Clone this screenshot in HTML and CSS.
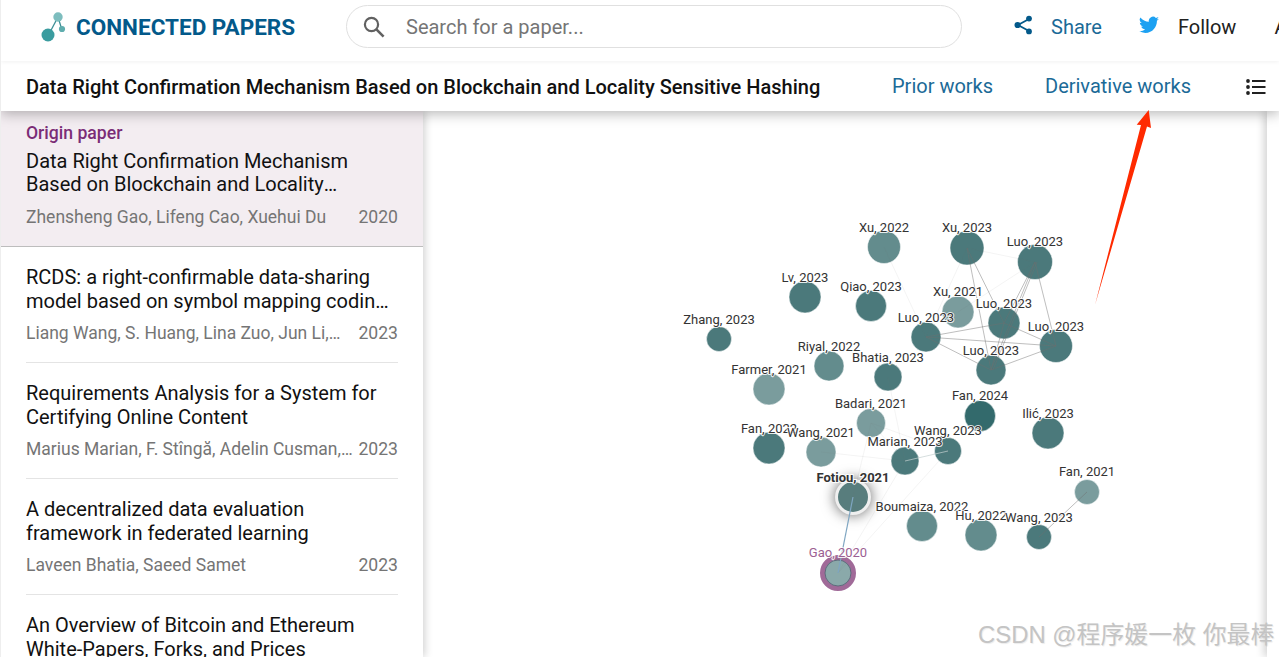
FILE: index.html
```html
<!DOCTYPE html>
<html lang="en">
<head>
    <meta charset="UTF-8">
    <title>Connected Papers</title>
    <link rel="stylesheet" href="styles.css">
</head>
<body>
    <div class="page">
        <header class="top-bar">
            <a class="logo">
                <svg class="logo-icon" width="30" height="34" viewBox="0 0 30 34">
                    <path d="M8 26L18 7L22 20" fill="none" stroke="#3f8f96" stroke-width="1.3"/>
                    <circle cx="8" cy="25" r="6.5" fill="#3a9c9f"/>
                    <circle cx="18" cy="7" r="4.7" fill="#7dbdbe"/>
                    <circle cx="22" cy="19" r="3.1" fill="#5fadae"/>
                </svg>
                <span class="logo-text">CONNECTED PAPERS</span>
            </a>
            <div class="search-box">
                <svg width="24" height="24" viewBox="0 0 24 24" class="search-icon">
                    <circle cx="9.5" cy="9.5" r="6.6" fill="none" stroke="#616161" stroke-width="2.2"/>
                    <path d="M14.4 14.4L21.6 21.6" stroke="#616161" stroke-width="2.6"/>
                </svg>
                <span class="search-text">Search for a paper...</span>
            </div>
            <a class="top-link share-link">
                <svg width="19" height="20" viewBox="0 0 19 20">
                    <path d="M15 4L4 10L15 16" fill="none" stroke="#03598a" stroke-width="1.8"/>
                    <circle cx="15" cy="3.6" r="2.9" fill="#03598a"/>
                    <circle cx="3.6" cy="10" r="3.1" fill="#03598a"/>
                    <circle cx="15" cy="16.4" r="2.9" fill="#03598a"/>
                </svg>
                <span>Share</span>
            </a>
            <a class="top-link follow-link">
                <svg width="20" height="18" viewBox="0 0 24 20">
                    <path fill="#1da1f2" d="M24 2.4c-.9.4-1.8.7-2.8.8 1-.6 1.8-1.600 2.200-2.700-1 .6-2 1-3.100 1.200A4.900 4.900 0 0 0 11.900 6.200C7.800 6 4.200 4 1.700.9a4.900 4.900 0 0 0 1.500 6.600c-.8 0-1.600-.2-2.200-.6v.1c0 2.400 1.700 4.400 3.900 4.800-.7.200-1.500.2-2.200.1.600 2 2.400 3.400 4.600 3.400A9.900 9.900 0 0 1 0 17.300 13.900 13.900 0 0 0 7.500 19.500c9.100 0 14-7.500 14-14v-.6c1-.7 1.800-1.600 2.500-2.500z"/>
                </svg>
                <span>Follow</span>
            </a>
            <a class="top-link about-link">About</a>
        </header>

        <div class="title-bar">
            <div class="graph-title">Data Right Confirmation Mechanism Based on Blockchain and Locality Sensitive Hashing</div>
            <a class="work-link prior-link">Prior works</a>
            <a class="work-link derivative-link">Derivative works</a>
            <svg class="list-icon" width="20" height="16" viewBox="0 0 20 16">
                <circle cx="2" cy="2" r="1.900" fill="#212121"/>
                <circle cx="2" cy="8" r="1.900" fill="#212121"/>
                <circle cx="2" cy="14" r="1.900" fill="#212121"/>
                <path d="M6 2H19.500M6 8H19.500M6 14H19.500" stroke="#212121" stroke-width="2"/>
            </svg>
        </div>

        <div class="main">
            <aside class="paper-list">
                <div class="paper-item origin">
                    <div class="origin-label">Origin paper</div>
                    <div class="paper-title">Data Right Confirmation Mechanism Based on Blockchain and Locality Sensitive Hashing</div>
                    <div class="paper-meta">
                        <span class="paper-authors">Zhensheng Gao, Lifeng Cao, Xuehui Du</span>
                        <span class="paper-year">2020</span>
                    </div>
                </div>
                <div class="paper-item">
                    <div class="paper-title">RCDS: a right-confirmable data-sharing model based on symbol mapping coding and blockchain</div>
                    <div class="paper-meta">
                        <span class="paper-authors">Liang Wang, S. Huang, Lina Zuo, Jun Li,…</span>
                        <span class="paper-year">2023</span>
                    </div>
                </div>
                <div class="paper-item">
                    <div class="paper-title">Requirements Analysis for a System for Certifying Online Content</div>
                    <div class="paper-meta">
                        <span class="paper-authors">Marius Marian, F. Stîngă, Adelin Cusman,…</span>
                        <span class="paper-year">2023</span>
                    </div>
                </div>
                <div class="paper-item">
                    <div class="paper-title">A decentralized data evaluation framework in federated learning</div>
                    <div class="paper-meta">
                        <span class="paper-authors">Laveen Bhatia, Saeed Samet</span>
                        <span class="paper-year">2023</span>
                    </div>
                </div>
                <div class="paper-item">
                    <div class="paper-title">An Overview of Bitcoin and Ethereum White-Papers, Forks, and Prices</div>
                </div>
            </aside>

            <section class="graph-panel">
                <!-- viewBox keeps the graph in screenshot coordinates -->
                <svg class="graph" viewBox="423 111 844 546" preserveAspectRatio="xMinYMin">
                    <g class="nodes">
                        <circle cx="884" cy="247" r="16.500" class="n3"/>
                        <circle cx="967" cy="248" r="17" class="n1"/>
                        <circle cx="1035" cy="262" r="17.500" class="n1"/>
                        <circle cx="805" cy="297" r="16" class="n1"/>
                        <circle cx="871" cy="306" r="15.500" class="n1"/>
                        <circle cx="958" cy="312" r="16" class="n4"/>
                        <circle cx="1004" cy="323" r="16" class="n1"/>
                        <circle cx="719" cy="339" r="12.500" class="n1"/>
                        <circle cx="926" cy="337" r="15" class="n1"/>
                        <circle cx="1056" cy="346" r="16.500" class="n1"/>
                        <circle cx="829" cy="366" r="15" class="n3"/>
                        <circle cx="991" cy="370" r="15" class="n1"/>
                        <circle cx="888" cy="377" r="14" class="n1"/>
                        <circle cx="769" cy="389" r="16" class="n4"/>
                        <circle cx="980" cy="416" r="15.500" class="n0"/>
                        <circle cx="871" cy="423" r="14.500" class="n4"/>
                        <circle cx="1048" cy="433" r="16" class="n1"/>
                        <circle cx="769" cy="448" r="16" class="n1"/>
                        <circle cx="821" cy="452" r="15" class="n4"/>
                        <circle cx="948" cy="451" r="13.500" class="n1"/>
                        <circle cx="905" cy="461" r="14" class="n1"/>
                        <circle cx="1087" cy="492" r="12.500" class="n4"/>
                        <circle cx="922" cy="526" r="15.500" class="n3"/>
                        <circle cx="981" cy="535" r="16" class="n3"/>
                        <circle cx="1039" cy="537" r="12.500" class="n1"/>
                        <circle cx="853" cy="497" r="16.500" class="selected"/>
                        <circle cx="838" cy="573" r="15.500" class="origin-node"/>
                        <circle cx="838" cy="573" r="13" class="origin-core"/>
                    </g>
                    <g class="edges faint">
                        <path d="M967 248L926 337M967 248L1035 262M958 312L1035 262M838 573L905 461M838 573L948 451M853 497L871 423M871 423L948 451M821 452L905 461M871 423L905 461M888 377L905 461M884 247L926 337"/>
                    </g>
                    <g class="edges">
                        <path d="M967 248L991 370M967 248L1004 323M1035 262L991 370M1037 262L993 370M1035 262L1004 323M1035 262L1056 346M926 337L1004 323M926 337L1056 346M926 337L991 370M1004 323L1056 346M991 370L1056 346M1004 323L991 370M1039 537L1087 492"/>
                    </g>
                    <path class="edge-main" d="M853 497L838 573"/>
                    <path class="edge-light" d="M905 461L948 451"/>
                    <g class="labels">
                        <text x="884" y="232">Xu, 2022</text>
                        <text x="967" y="232">Xu, 2023</text>
                        <text x="1035" y="246">Luo, 2023</text>
                        <text x="805" y="282">Lv, 2023</text>
                        <text x="871" y="291">Qiao, 2023</text>
                        <text x="958" y="296">Xu, 2021</text>
                        <text x="1004" y="308">Luo, 2023</text>
                        <text x="719" y="324">Zhang, 2023</text>
                        <text x="926" y="322">Luo, 2023</text>
                        <text x="1056" y="331">Luo, 2023</text>
                        <text x="829" y="351">Riyal, 2022</text>
                        <text x="991" y="355">Luo, 2023</text>
                        <text x="888" y="362">Bhatia, 2023</text>
                        <text x="769" y="374">Farmer, 2021</text>
                        <text x="980" y="400">Fan, 2024</text>
                        <text x="871" y="408">Badari, 2021</text>
                        <text x="1048" y="418">Ilić, 2023</text>
                        <text x="769" y="433">Fan, 2022</text>
                        <text x="821" y="437">Wang, 2021</text>
                        <text x="948" y="435">Wang, 2023</text>
                        <text x="905" y="446">Marian, 2023</text>
                        <text x="1087" y="476">Fan, 2021</text>
                        <text x="853" y="482" class="label-selected">Fotiou, 2021</text>
                        <text x="922" y="511">Boumaiza, 2022</text>
                        <text x="981" y="520">Hu, 2022</text>
                        <text x="1039" y="522">Wang, 2023</text>
                        <text x="838" y="557" class="label-origin">Gao, 2020</text>
                    </g>
                </svg>
            </section>
            <div class="right-panel"></div>
        </div>

        <!-- annotation drawn over the screenshot -->
        <svg class="red-arrow" width="60" height="200" viewBox="0 0 60 200">
            <path d="M54.700 0L57 18L53 16.500L1 195L47 15L42.700 14.700Z" fill="#ff2a00"/>
        </svg>
        <div class="watermark">CSDN @程序媛一枚 你最棒</div>
    </div>
</body>
</html>
```

FILE: styles.css
```css
html, body {
    margin: 0;
    height: 100%;
    overflow: hidden;
}

body {
    font-family: Roboto, 'Liberation Sans', sans-serif;
    background-color: white;
    color: #212121;
}

.page {
    position: relative;
    display: flex;
    flex-direction: column;
    height: 657px;
    overflow: hidden;
    border-left: 1px solid #eeeeee;
    box-sizing: border-box;
}

.top-bar {
    display: flex;
    align-items: center;
    flex: 0 0 61px;
    padding-bottom: 8px;
    box-sizing: border-box;
    white-space: nowrap;
    box-shadow: 0 1px 4px rgba(0, 0, 0, 0.06);
    position: relative;
    z-index: 3;
    background-color: white;
}

.logo {
    display: flex;
    align-items: center;
    flex: none;
    margin-left: 39px;
    width: 306px;
}

.logo-icon {
    margin-right: 6px;
    margin-top: 1px;
}

.logo-text {
    font-size: 22.500px;
    font-weight: 700;
    color: #03598a;
}

.search-box {
    display: flex;
    align-items: center;
    flex: none;
    width: 616px;
    height: 43px;
    border: 1px solid #e0e0e0;
    border-radius: 22px;
    box-sizing: border-box;
}

.search-icon {
    margin-left: 15px;
}

.search-text {
    margin-left: 20px;
    font-size: 20px;
    color: #757575;
}

.top-link {
    display: flex;
    align-items: center;
    flex: none;
    font-size: 20px;
}

.share-link {
    margin-left: 52px;
    color: #1b6a97;
}

.share-link svg {
    margin-right: 18px;
    margin-top: -4px;
}

.follow-link {
    margin-left: 37px;
    color: #212121;
}

.follow-link svg {
    margin-right: 19px;
    margin-top: -4px;
}

.about-link {
    margin-left: 38px;
    color: #212121;
}

.title-bar {
    display: flex;
    align-items: center;
    flex: 0 0 50px;
    position: relative;
    z-index: 2;
    background-color: white;
    box-shadow: 0 3px 12px rgba(0, 0, 0, 0.28);
}

.graph-title {
    margin-left: 25px;
    margin-top: 2px;
    width: 866px;
    font-size: 20px;
    font-weight: 500;
    color: #111111;
    white-space: nowrap;
}

.work-link {
    font-size: 20px;
    color: #1b6a97;
    white-space: nowrap;
}

.prior-link {
    width: 153px;
}

.derivative-link {
    width: 201px;
}

.list-icon {
    flex: none;
    margin-top: 2px;
}

.main {
    display: flex;
    flex: 1;
    min-height: 0;
}

.paper-list {
    flex: 0 0 422px;
    position: relative;
    z-index: 1;
    overflow: hidden;
    background-color: white;
    box-shadow: 2px 0 8px rgba(0, 0, 0, 0.18);
}

.paper-item {
    margin: 0 25px;
    padding: 18px 0 16.700px;
    border-bottom: 1px solid #e4e4e4;
}

.paper-item:last-child {
    border-bottom: none;
}

.paper-item.origin {
    margin: 0;
    padding: 12px 25px 17px;
    background-color: #f3edf1;
    border-bottom: 1px solid #bdbdbd;
}

.origin-label {
    font-size: 17.600px;
    font-weight: 500;
    line-height: 21px;
    margin-bottom: 6px;
    color: #7b2d77;
}

.paper-title {
    font-size: 20px;
    line-height: 24px;
    color: #111111;
    display: -webkit-box;
    -webkit-box-orient: vertical;
    -webkit-line-clamp: 2;
    overflow: hidden;
}

.origin .paper-title {
    line-height: 23px;
}

.paper-meta {
    display: flex;
    justify-content: space-between;
    margin-top: 8.500px;
    font-size: 17.600px;
    line-height: 24px;
    color: #757575;
}

.paper-authors {
    font-size: 17.500px;
    white-space: nowrap;
}

.graph-panel {
    flex: 0 0 844px;
    background-color: white;
}

.graph {
    display: block;
    width: 844px;
    height: 546px;
}

.right-panel {
    flex: 1;
    background-color: white;
    box-shadow: -3px 0 8px rgba(0, 0, 0, 0.18);
    position: relative;
}

.n0 { fill: #336a6c; }
.n1 { fill: #4b797b; }
.n3 { fill: #638c8d; }
.n4 { fill: #7a9c9d; }

.nodes circle {
    stroke: white;
    stroke-width: 0.5;
}

.nodes .selected {
    fill: #587d7d;
    stroke: #efefef;
    stroke-width: 3;
    filter: drop-shadow(0 0 7px rgba(0, 0, 0, 0.6));
}

.nodes .origin-node {
    fill: #8aa9aa;
    stroke: #a06a98;
    stroke-width: 5;
}

.nodes .origin-core {
    fill: #8aa9aa;
    stroke: #5f6a7c;
    stroke-width: 1;
}

.edges {
    fill: none;
    stroke: #6f6f6f;
    stroke-opacity: 0.45;
    stroke-width: 1;
}

.edges.faint {
    stroke-opacity: 0.08;
}

.edge-main {
    fill: none;
    stroke: #7fa6c2;
    stroke-width: 1.200;
}

.edge-light {
    fill: none;
    stroke: #c4d0d0;
    stroke-opacity: 0.7;
    stroke-width: 1;
}

.labels text {
    font-size: 13px;
    fill: #333333;
    text-anchor: middle;
    stroke: rgba(255, 255, 255, 0.85);
    stroke-width: 2px;
    paint-order: stroke;
}

.labels .label-selected {
    font-weight: 700;
}

.labels .label-origin {
    fill: #9c5f93;
}

.red-arrow {
    position: absolute;
    left: 1093px;
    top: 110px;
    z-index: 4;
}

.watermark {
    position: absolute;
    left: 977px;
    top: 620px;
    z-index: 4;
    font-family: 'Liberation Sans', 'Noto Sans CJK SC', sans-serif;
    font-size: 23.900px;
    line-height: 30px;
    white-space: nowrap;
    color: #c4c4c4;
    text-shadow: 1px 1px 1px rgba(0, 0, 0, 0.08);
}
```
